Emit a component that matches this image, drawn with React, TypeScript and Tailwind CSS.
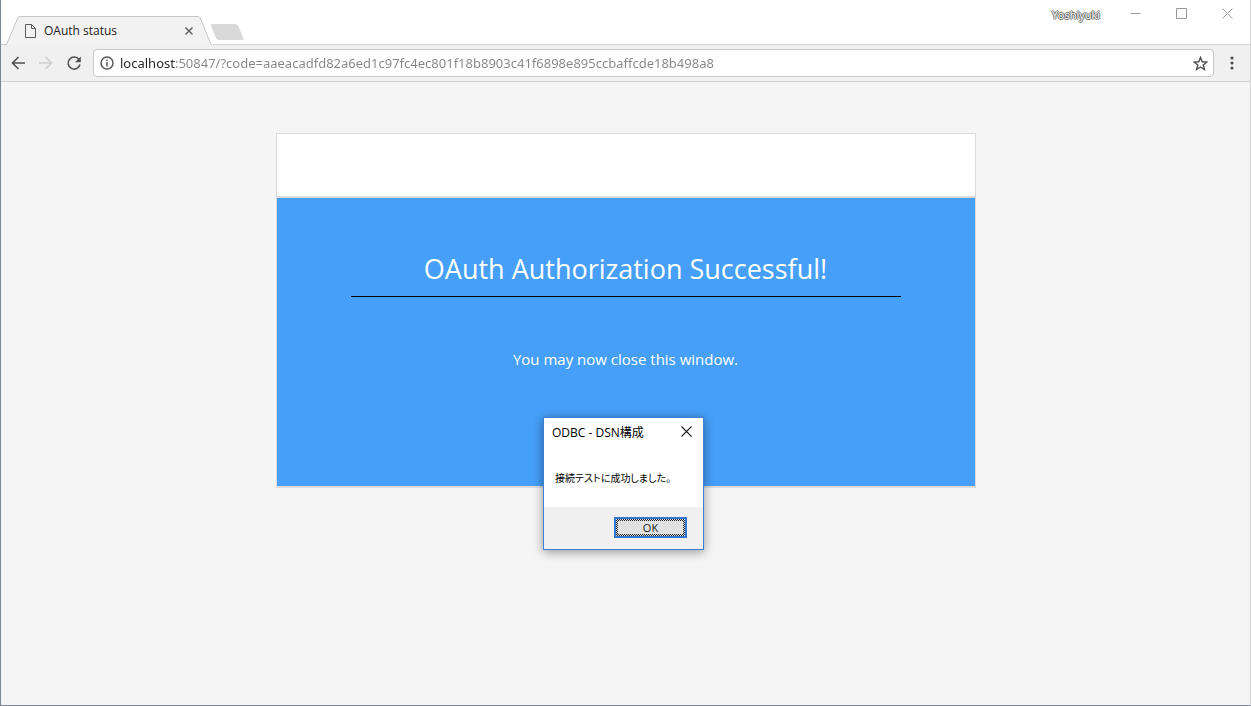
import type { ReactNode } from 'react';

const PAGE_URL =
  'localhost:50847/?code=aaeacadfd82a6ed1c97fc4ec801f18b8903c41f6898e895ccbaffcde18b498a8';

export default function App() {
  return (
    <div className="relative flex min-h-screen flex-col border-b border-l border-r border-[#7d8794] border-r-[#d4d4d4] bg-[#f5f5f5] font-['Open_Sans','Noto_Sans_CJK_JP',sans-serif]">
      <TitleBar />
      <Toolbar />
      <main className="flex-1 px-4 pt-[51px] pb-12">
        <StatusCard />
      </main>
      <ResultDialog />
    </div>
  );
}

/**
 * Window title bar with the tab strip and window controls
 */
function TitleBar() {
  return (
    <header className="flex h-[45px] justify-between border-b border-[#d2d2d2] bg-white">
      <div className="flex pt-4 pl-1">
        {/* Active tab */}
        <div className="relative h-[29px] w-[208px]">
          <svg className="absolute inset-0" width="208" height="29" viewBox="0 0 208 29" aria-hidden="true">
            <path d="M0 28.5H1.5L13 1.5Q13.500 .5 15 .5H193Q194.500 .5 195 1.500L206 28.500H208V29H0Z" fill="#f2f2f2" />
            <path d="M0 28.500H1.500L13 1.500Q13.500 .5 15 .5H193Q194.500 .5 195 1.500L206 28.500" fill="none" stroke="#c6c6c6" />
          </svg>
          <div className="relative flex h-full items-center pr-4 pl-5">
            <svg width="11" height="14" viewBox="0 0 11 14" fill="none" stroke="#5a5a5a" aria-hidden="true">
              <path d="M.5.5h6l4 4v9H.5z" />
              <path d="M6.500.5v4h4" />
            </svg>
            <span className="ml-2 flex-1 text-xs text-[#222]">OAuth status</span>
            <button type="button" aria-label="Close tab" className="flex size-4 items-center justify-center">
              <svg width="8" height="8" viewBox="0 0 8 8" stroke="#5a5a5a" strokeWidth="1.400" aria-hidden="true">
                <path d="M.5.5l7 7M7.500.5l-7 7" />
              </svg>
            </button>
          </div>
        </div>
        <button type="button" aria-label="New tab" className="mt-2 -ml-1 h-4">
          <svg width="36" height="16" viewBox="0 0 36 16" aria-hidden="true">
            <path d="M3 0h23q2.500 0 3.500 2.500l5 12q.5 1.500-1.500 1.500H10q-2 0-3-2L2 2Q1.500 0 3 0z" fill="#d9d9d9" />
          </svg>
        </button>
      </div>

      <div className="flex h-[27px] items-center">
        <button
          type="button"
          className="mr-1 px-2 pt-1 text-[11px] text-white [text-shadow:1px_0_0_#666,-1px_0_0_#666,0_1px_0_#666,0_-1px_0_#666]"
        >
          Yoshiyuki
        </button>
        <WindowButton label="Minimize">
          <path d="M.5 5.500h10" />
        </WindowButton>
        <WindowButton label="Maximize">
          <path d="M.5.5h10v10H.5z" />
        </WindowButton>
        <WindowButton label="Close">
          <path d="M.5.5l10 10M10.500.5l-10 10" />
        </WindowButton>
      </div>
    </header>
  );
}

function WindowButton({ label, children }: { label: string; children: ReactNode }) {
  return (
    <button type="button" aria-label={label} className="flex h-full w-[46px] items-center justify-center">
      <svg width="11" height="11" viewBox="0 0 11 11" fill="none" stroke="#999" aria-hidden="true">
        {children}
      </svg>
    </button>
  );
}

/**
 * Navigation buttons and address bar
 */
function Toolbar() {
  return (
    <div className="flex h-[37px] items-center border-b border-[#d2d2d2] bg-[#f0f0f0] pl-[3px]">
      <NavButton label="Back">
        <path d="M15 8H3M8.500 2L2.500 8l6 6" stroke="#505050" />
      </NavButton>
      <NavButton label="Forward">
        <path d="M1 8h12M7.500 2l6 6-6 6" stroke="#cfcfcf" />
      </NavButton>
      <NavButton label="Reload">
        <path d="M13 4.500A6 6 0 1 0 14 9.500" stroke="#505050" />
        <path d="M14.800 1.500v5.800H9z" fill="#505050" />
      </NavButton>
      <div className="ml-[5px] flex h-7 flex-1 items-center rounded-sm border border-[#c8c8c8] bg-white pr-[5px] pl-1.5">
        <svg width="14" height="14" viewBox="0 0 14 14" fill="none" stroke="#5a5a5a" strokeWidth="1.500" aria-hidden="true">
          <circle cx="7" cy="7" r="6" />
          <path d="M7 6v4.500M7 3.500v1.500" />
        </svg>
        <input
          type="text"
          aria-label="Address"
          defaultValue={PAGE_URL}
          className="ml-1.5 h-6 min-w-0 flex-1 bg-[linear-gradient(to_right,#222_55px,#858585_55px)] bg-clip-text font-['Noto_Sans',sans-serif] text-[13px] text-transparent outline-none"
        />
        <button type="button" aria-label="Bookmark this page">
          <svg width="15" height="15" viewBox="0 0 15 15" fill="none" stroke="#505050" strokeWidth="1.400" aria-hidden="true">
            <path d="M7.500 1.500l1.700 4.300 4.600.3-3.600 2.900 1.200 4.500-3.900-2.500-3.900 2.500 1.200-4.500L1.200 6.100l4.600-.3z" />
          </svg>
        </button>
      </div>
      <button type="button" aria-label="Menu" className="flex h-7 w-9 items-center justify-center">
        <svg width="4" height="14" viewBox="0 0 4 14" fill="#505050" aria-hidden="true">
          <circle cx="2" cy="2" r="1.600" />
          <circle cx="2" cy="7" r="1.600" />
          <circle cx="2" cy="12" r="1.600" />
        </svg>
      </button>
    </div>
  );
}

function NavButton({ label, children }: { label: string; children: ReactNode }) {
  return (
    <button type="button" aria-label={label} className="flex size-7 items-center justify-center">
      <svg width="16" height="16" viewBox="0 0 16 16" fill="none" strokeWidth="1.600" aria-hidden="true">
        {children}
      </svg>
    </button>
  );
}

/**
 * Authorization status card
 */
function StatusCard() {
  return (
    <section className="mx-auto max-w-[700px] border border-b-2 border-[#dcdcdc]">
      <div className="h-16 border-b-2 border-[#dcdcdc] bg-white" />
      <div className="bg-[#469ff9] px-[74px] pt-[50px] pb-[115px] text-center text-white">
        <h1 className="border-b border-black pb-1.5 text-[27px] leading-[42px] font-normal">
          OAuth Authorization Successful!
        </h1>
        <p className="mt-[50px] text-[15px] leading-6">You may now close this window.</p>
      </div>
    </section>
  );
}

/**
 * Message box floating above the browser page
 */
function ResultDialog() {
  return (
    <div
      role="dialog"
      aria-labelledby="dialog-title"
      className="absolute top-[417px] left-[542px] w-[161px] border border-[#3c7fd0] bg-white shadow-[0_2px_10px_rgba(0,0,0,0.4)]"
    >
      <div className="flex h-[30px] items-center justify-between pr-[11px] pl-2">
        <h2 id="dialog-title" className="text-xs text-black">
          ODBC - DSN構成
        </h2>
        <button type="button" aria-label="Close" className="pb-1">
          <svg width="11" height="11" viewBox="0 0 11 11" stroke="#222" strokeWidth="1.100" aria-hidden="true">
            <path d="M.5.5l10 10M10.500.5l-10 10" />
          </svg>
        </button>
      </div>
      <p className="h-[59px] pt-[22px] pl-[11px] text-[10px] leading-4 whitespace-nowrap text-black [font-feature-settings:'palt']">
        接続テストに成功しました。
      </p>
      <div className="flex h-[42px] items-start justify-end bg-[#f0f0f0] pt-2.5 pr-4">
        <button
          type="button"
          className="h-[21px] w-[73px] border-2 border-[#3277d2] bg-[repeating-conic-gradient(#222_0_25%,#e1e1e1_0_50%)] bg-[length:2px_2px] p-0.5 text-[11px] leading-[13px] text-[#222]"
        >
          <span className="block h-full bg-[#e1e1e1]">OK</span>
        </button>
      </div>
    </div>
  );
}
